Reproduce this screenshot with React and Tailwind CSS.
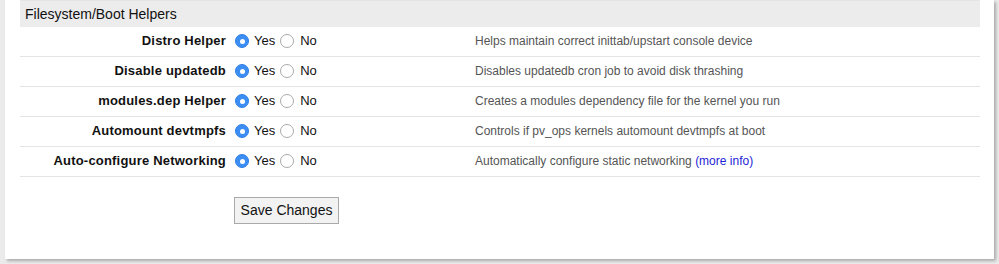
import React from "react";

const rows = [
  { label: "Distro Helper", desc: "Helps maintain correct inittab/upstart console device" },
  { label: "Disable updatedb", desc: "Disables updatedb cron job to avoid disk thrashing" },
  { label: "modules.dep Helper", desc: "Creates a modules dependency file for the kernel you run" },
  { label: "Automount devtmpfs", desc: "Controls if pv_ops kernels automount devtmpfs at boot" },
  { label: "Auto-configure Networking", desc: "Automatically configure static networking", more: true },
];

function Radio({ checked }) {
  return checked ? (
    <span className="inline-flex h-[14px] w-[14px] items-center justify-center rounded-full bg-[#3c8ef4] border border-[#2f7fe6]">
      <span className="h-[5px] w-[5px] rounded-full bg-white" />
    </span>
  ) : (
    <span className="inline-block h-[14px] w-[14px] rounded-full bg-white border border-[#ababab]" />
  );
}

export default function App() {
  return (
    <div className="w-[999px] h-[264px] bg-[#ebebeb] font-['Liberation_Sans',Arial,sans-serif]">
      <div className="ml-[5px] w-[989px] h-[259px] bg-white shadow-[2px_2px_3px_rgba(0,0,0,0.28)] pl-[15px] pr-[14px]">
        <div className="h-[27px] bg-[#ececec] border-t border-[#e4e4e4] pl-[5px] flex items-center text-[14px] text-[#111]">
          Filesystem/Boot Helpers
        </div>
        {rows.map((r) => (
          <div key={r.label} className="h-[30px] border-b border-[#e4e4e4] flex items-center pb-[1px]">
            <div className="w-[206px] text-right text-[13px] font-bold tracking-[0.2px] text-[#111]">{r.label}</div>
            <div className="w-[249px] pl-[9px] flex items-center text-[13px] text-[#111]">
              <Radio checked />
              <span className="ml-[5px]">Yes</span>
              <span className="ml-[5px] flex items-center">
                <Radio />
              </span>
              <span className="ml-[6px]">No</span>
            </div>
            <div className="text-[12px] text-[#555]">
              {r.desc}
              {r.more && (
                <>
                  {" "}
                  <a className="text-[#2323d6]">(more info)</a>
                </>
              )}
            </div>
          </div>
        ))}
        <div className="pt-[20px] pl-[214px]">
          <button className="h-[27px] w-[105px] border border-[#a9a9a9] bg-[#f2f2f2] text-[14px] text-[#111]">
            Save Changes
          </button>
        </div>
      </div>
    </div>
  );
}
